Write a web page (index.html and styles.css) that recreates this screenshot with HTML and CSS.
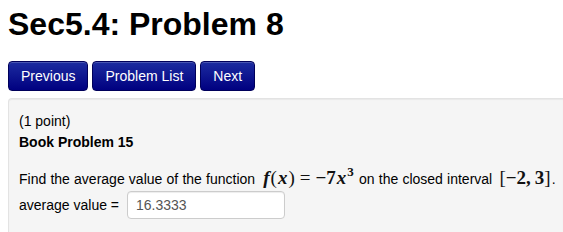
FILE: index.html
```html
<!DOCTYPE html>
<html lang="en">
  <head>
    <meta charset="UTF-8" />
    <title>Sec5.4: Problem 8</title>
    <link rel="stylesheet" href="styles.css">
  </head>
  <body>
    <h1 class="title">Sec5.4: Problem 8</h1>
    <div class="nav">
      <button class="btn">Previous</button>
      <button class="btn">Problem List</button>
      <button class="btn">Next</button>
    </div>
    <div class="well">
      <div class="points">(1 point)</div>
      <div class="name">Book Problem 15</div>
      <div class="question">
        Find the average value of the function
        <span class="math"><i>f</i><span class="paren">(</span><i>x</i><span class="paren">)</span><span class="eq">=</span>&minus;7<i>x</i><sup>3</sup></span>
        on the closed interval
        <span class="math"><span class="paren">[</span>&minus;2,<span class="thin"></span>3<span class="paren">]</span></span>.
      </div>
      <div class="answer">
        <span>average value =</span>
        <input class="answer-input" type="text" value="16.3333" />
      </div>
    </div>
  </body>
</html>
```

FILE: styles.css
```css
html {
  overflow: hidden;
}
body {
  margin: 8px 0 8px 8px;
  font-family: "Liberation Sans", Arial, sans-serif;
  font-size: 14px;
  line-height: 20px;
  color: #000;
  background-color: #fff;
}
.title {
  margin: 0 0 21px 0;
  font-size: 32px;
  line-height: 32px;
  font-weight: bold;
}
.nav {
  display: flex;
  gap: 4px;
  margin-bottom: 7px;
}
.btn {
  font-family: "Liberation Sans", Arial, sans-serif;
  font-size: 14px;
  line-height: 20px;
  color: #fff;
  padding: 4px 12px;
  border: 1px solid #00005a;
  border-radius: 4px;
  background: linear-gradient(#1c2ca0, #000080);
  box-shadow: inset 0 1px 0 rgba(255, 255, 255, 0.2);
}
.well {
  background-color: #f5f5f5;
  border: 1px solid #e3e3e3;
  border-right: none;
  border-radius: 4px 0 0 4px;
  box-shadow: inset 0 1px 1px rgba(0, 0, 0, 0.05);
  padding: 12px 0 20px 10px;
}
.points {
  margin-bottom: 1px;
}
.name {
  font-weight: bold;
  margin-bottom: 16px;
}
.question {
  word-spacing: 0.3px;
}
.math {
  font-family: "Liberation Serif", "Times New Roman", serif;
  font-size: 19px;
  line-height: 1;
  font-weight: bold;
  color: #111;
  margin: 0 1px 0 3px;
  word-spacing: 0;
}
.math i {
  font-style: italic;
  padding: 0 1px;
}
.math .paren {
  font-weight: normal;
}
.math .eq {
  font-weight: normal;
  padding: 0 5px;
}
.math sup {
  font-size: 13px;
  line-height: 0;
  vertical-align: 8px;
}
.thin {
  display: inline-block;
  width: 4px;
}
.answer {
  display: flex;
  align-items: center;
  margin-top: 2px;
}
.answer-input {
  margin-left: 8px;
  width: 158px;
  height: 28px;
  box-sizing: border-box;
  padding: 4px 8px;
  font-family: "Liberation Sans", Arial, sans-serif;
  font-size: 14px;
  color: #555;
  background-color: #fff;
  border: 1px solid #ccc;
  border-radius: 4px;
  box-shadow: inset 0 1px 1px rgba(0, 0, 0, 0.075);
}
```
